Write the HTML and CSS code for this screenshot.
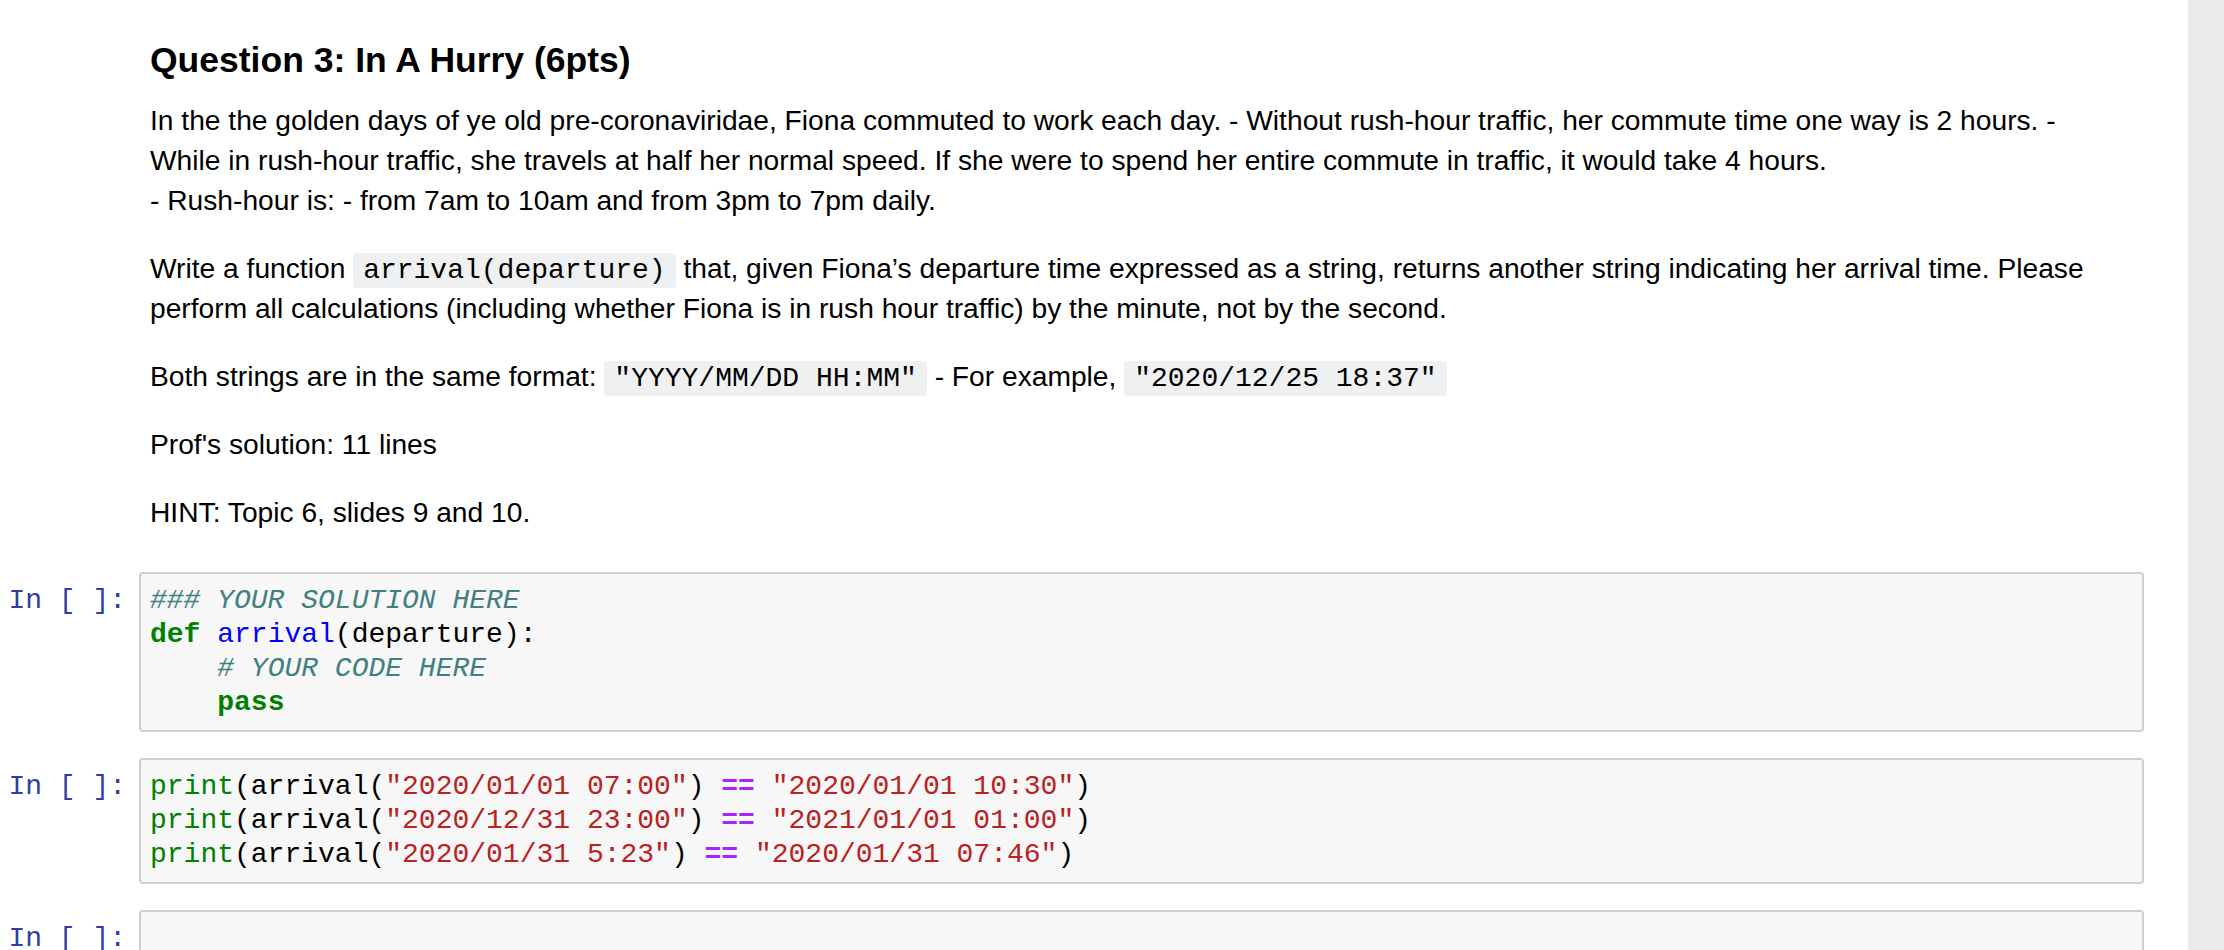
FILE: index.html
```html
<!DOCTYPE html>
<html>
<head>
<meta charset="utf-8">
<title>Question 3</title>
<link rel="stylesheet" href="styles.css">
</head>
<body>
<div class="page">
  <main class="notebook">
    <section class="cell text-cell">
      <div class="rendered">
        <h3 class="title">Question 3: In A Hurry (6pts)</h3>
        <p class="para">In the the golden days of ye old pre-coronaviridae, Fiona commuted to work each day. - Without rush-hour traffic, her commute time one way is 2 hours. -<br>While in rush-hour traffic, she travels at half her normal speed. If she were to spend her entire commute in traffic, it would take 4 hours.<br>- Rush-hour is: - from 7am to 10am and from 3pm to 7pm daily.</p>
        <p class="para">Write a function <code class="inline">arrival(departure)</code> that, given Fiona’s departure time expressed as a string, returns another string indicating her arrival time. Please<br>perform all calculations (including whether Fiona is in rush hour traffic) by the minute, not by the second.</p>
        <p class="para">Both strings are in the same format: <code class="inline">"YYYY/MM/DD HH:MM"</code> - For example, <code class="inline">"2020/12/25 18:37"</code></p>
        <p class="para">Prof's solution: 11 lines</p>
        <p class="para">HINT: Topic 6, slides 9 and 10.</p>
      </div>
    </section>

    <section class="cell code-cell">
      <div class="prompt">In [ ]:</div>
      <div class="input-area"><pre class="code"><span class="c">### YOUR SOLUTION HERE</span>
<span class="k">def</span> <span class="d">arrival</span>(departure):
    <span class="c"># YOUR CODE HERE</span>
    <span class="k">pass</span></pre></div>
    </section>

    <section class="cell code-cell">
      <div class="prompt">In [ ]:</div>
      <div class="input-area"><pre class="code"><span class="b">print</span>(arrival(<span class="s">"2020/01/01 07:00"</span>) <span class="o">==</span> <span class="s">"2020/01/01 10:30"</span>)
<span class="b">print</span>(arrival(<span class="s">"2020/12/31 23:00"</span>) <span class="o">==</span> <span class="s">"2021/01/01 01:00"</span>)
<span class="b">print</span>(arrival(<span class="s">"2020/01/31 5:23"</span>) <span class="o">==</span> <span class="s">"2020/01/31 07:46"</span>)</pre></div>
    </section>

    <section class="cell code-cell">
      <div class="prompt">In [ ]:</div>
      <div class="input-area"><pre class="code"> </pre></div>
    </section>
  </main>
  <div class="scrollbar"></div>
</div>
</body>
</html>
```

FILE: styles.css
```css
html, body {
  margin: 0;
  padding: 0;
  background: #ffffff;
  overflow: hidden;
}

.page {
  display: flex;
  width: 2224px;
  height: 950px;
  overflow: hidden;
}

.notebook {
  flex: 1;
  padding-right: 44px;
  min-width: 0;
}

.scrollbar {
  width: 36px;
  flex: none;
  background: #ebebeb;
}

.text-cell {
  padding-left: 150px;
  padding-top: 39px;
  margin-bottom: 40px;
}

.rendered {
  font-family: "Liberation Sans", Arial, Helvetica, sans-serif;
  color: #000;
  white-space: nowrap;
}

.title {
  margin: 0 0 19px 0;
  font-size: 35.5px;
  line-height: 42px;
  font-weight: bold;
}

.para {
  margin: 0;
  font-size: 28.2px;
  line-height: 40px;
}

.para + .para {
  margin-top: 28px;
}

.inline {
  font-family: "Liberation Mono", "Courier New", monospace;
  font-size: 28px;
  line-height: 1;
  background: #eff0f1;
  padding: 2px 10px;
  border-radius: 4px;
}

.code-cell {
  display: flex;
  margin-bottom: 26px;
}

.prompt {
  width: 139px;
  flex: none;
  box-sizing: border-box;
  padding: 12px 13px 0 0;
  text-align: right;
  font-family: "Liberation Mono", "Courier New", monospace;
  font-size: 28px;
  line-height: 34px;
  color: #303f9f;
}

.input-area {
  flex: 1;
  border: 2px solid #cfcfcf;
  border-radius: 4px;
  background: #f7f7f7;
  padding: 10px 9px;
}

.code {
  margin: 0;
  font-family: "Liberation Mono", "Courier New", monospace;
  font-size: 28px;
  line-height: 34px;
  color: #000;
}

.c { color: #408080; font-style: italic; }
.k { color: #008000; font-weight: bold; }
.d { color: #0000ff; }
.b { color: #008000; }
.s { color: #ba2121; }
.o { color: #aa22ff; font-weight: bold; }
```
